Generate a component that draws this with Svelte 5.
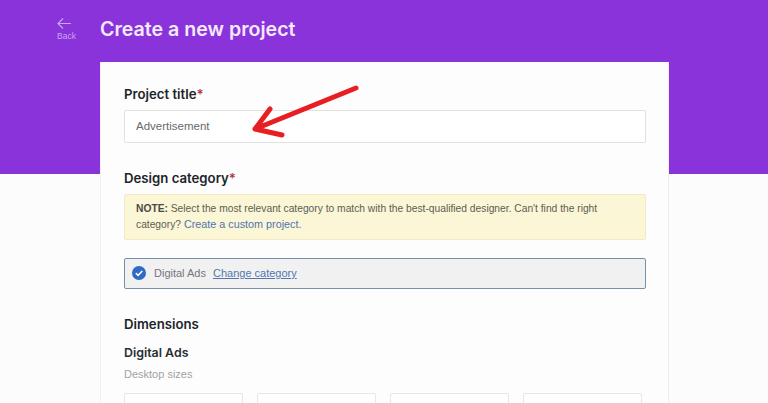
<script>
	const sizes = [1, 2, 3, 4];
</script>

<div class="page">
	<header class="banner">
		<a class="back" href="#back">
			<svg width="14" height="11" viewBox="0 0 14 11" fill="none" stroke="currentColor" stroke-width="1.2">
				<path d="M14 5.5H1M6 .5L1 5.5l5 5" />
			</svg>
			<span>Back</span>
		</a>
		<h1>Create a new project</h1>
	</header>

	<main class="card">
		<section class="field title-field">
			<h2>Project title<em>*</em></h2>
			<div class="input">Advertisement</div>
			<svg class="arrow" width="112" height="60" viewBox="0 0 112 60" fill="none" stroke="#e81f22" stroke-width="5" stroke-linecap="round" stroke-linejoin="round">
				<path d="M105 7L4 48M19 28L4 48l27 6" />
			</svg>
		</section>

		<section class="field category">
			<h2>Design category<em>*</em></h2>
			<div class="note">
				<b>NOTE:</b> Select the most relevant category to match with the best-qualified designer. Can't find the right category? <a href="#custom">Create a custom project.</a>
			</div>
			<div class="selected">
				<svg width="14" height="14" viewBox="0 0 14 14">
					<circle cx="7" cy="7" r="7" fill="#2f6ac4" />
					<path d="M3.8 7.2l2.3 2.2 4.2-4.4" fill="none" stroke="#fff" stroke-width="1.6" />
				</svg>
				<span>Digital Ads</span>
				<a href="#change">Change category</a>
			</div>
		</section>

		<section class="dimensions">
			<h2>Dimensions</h2>
			<h3>Digital Ads</h3>
			<p>Desktop sizes</p>
			<div class="size-grid">
				{#each sizes as size (size)}
					<div class="size"></div>
				{/each}
			</div>
		</section>
	</main>
</div>

<style>
	:global(body) {
		margin: 0;
		background: #fcfcfc;
	}

	.page {
		position: relative;
		height: 403px;
		overflow: hidden;
		background: linear-gradient(#8a33db 0 174px, #fcfcfc 174px);
		font-family: "Liberation Sans", Arial, sans-serif;
	}

	.banner {
		display: flex;
		align-items: flex-start;
		height: 62px;
		padding-left: 57px;
		box-sizing: border-box;
	}

	.back {
		display: flex;
		flex-direction: column;
		align-items: flex-start;
		width: 43px;
		padding-top: 18px;
		color: #c9a5ef;
		font-size: 8.5px;
		text-decoration: none;
	}

	.back span {
		margin-top: 2px;
	}

	h1 {
		margin: 17px 0 0;
		color: #f3e9fb;
		font-family: Inter, sans-serif;
		font-size: 19.6px;
		font-weight: 600;
		line-height: 25px;
	}

	.card {
		width: 569px;
		margin-left: 100px;
		height: 341px;
		box-sizing: border-box;
		padding: 23px 22px 0 23px;
		background: #fdfdfd;
		border-left: 1px solid #f0f0f0;
		border-right: 1px solid #eeeeee;
	}

	.field {
		position: relative;
	}

	h2 {
		margin: 0;
		color: #20242a;
		font-family: Inter, sans-serif;
		font-size: 13.2px;
		font-weight: 600;
		line-height: 18px;
	}

	h2 em {
		color: #b3353f;
		font-style: normal;
	}

	.input {
		height: 33px;
		box-sizing: border-box;
		margin-top: 7px;
		padding: 0 11px;
		border: 1px solid #e1e1e1;
		border-radius: 2px;
		background: #fff;
		color: #6a6a6a;
		font-size: 11.5px;
		line-height: 31px;
	}

	.arrow {
		position: absolute;
		left: 127px;
		top: -4px;
	}

	.category {
		margin-top: 26px;
	}

	.note {
		height: 46px;
		box-sizing: border-box;
		margin-top: 7px;
		padding: 6px 11px;
		border: 1px solid #f3eac3;
		border-radius: 2px;
		background: #fbf6d6;
		color: #5d5d55;
		font-size: 10.25px;
		line-height: 15.5px;
	}

	.note b {
		color: #4a4a44;
	}

	.note a {
		color: #4f74b0;
		font-size: 10.8px;
		text-decoration: none;
	}

	.selected {
		display: flex;
		align-items: center;
		height: 31px;
		box-sizing: border-box;
		margin-top: 18px;
		padding: 0 0 1px 7px;
		border: 1.5px solid #7391ae;
		border-radius: 2px;
		background: #f1f1f2;
		color: #75767a;
		font-size: 11px;
	}

	.selected span {
		margin-left: 8px;
	}

	.selected a {
		margin-left: 7px;
		color: #5277ae;
	}

	.dimensions {
		margin-top: 26px;
	}

	h3 {
		margin: 12px 0 0;
		color: #2b2e33;
		font-family: Inter, sans-serif;
		font-size: 12.4px;
		font-weight: 600;
		line-height: 16px;
	}

	p {
		margin: 6px 0 0;
		color: #a2a2a2;
		font-size: 11px;
		line-height: 14px;
	}

	.size-grid {
		display: grid;
		grid-template-columns: repeat(4, 119px);
		gap: 14px;
		margin-top: 12px;
	}

	.size {
		height: 60px;
		box-sizing: border-box;
		border: 1px solid #e6e6e6;
		border-radius: 2px;
		background: #fff;
	}
</style>
